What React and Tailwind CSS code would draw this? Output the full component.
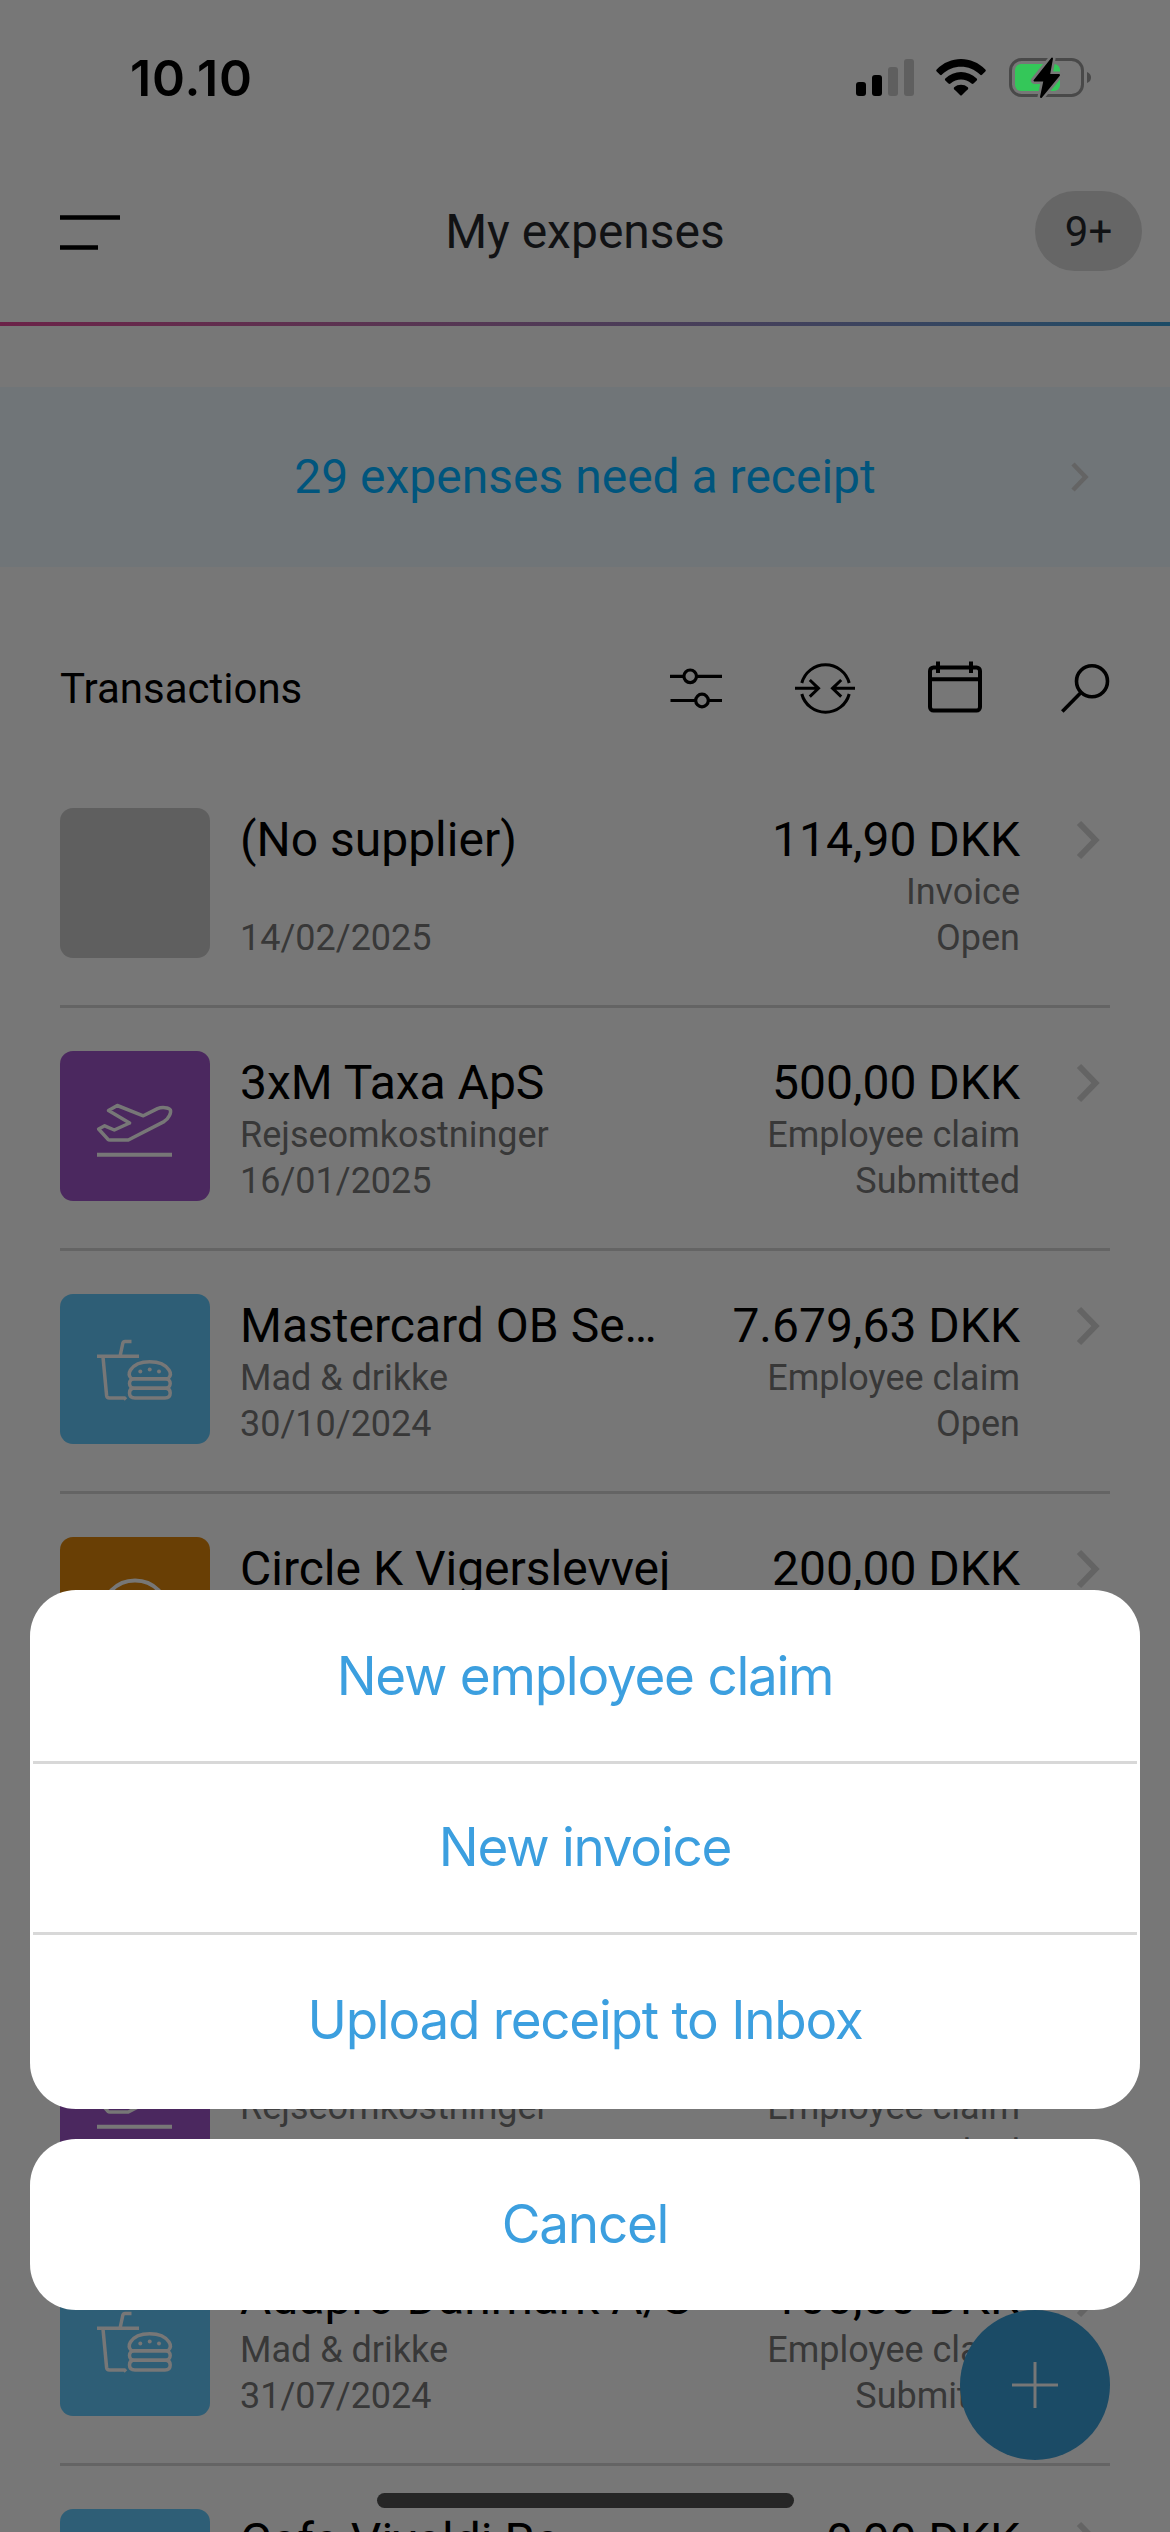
const rows = [
  { tile: "none", title: "(No supplier)", category: "", date: "14/02/2025", amount: "114,90 DKK", type: "Invoice", status: "Open" },
  { tile: "travel", title: "3xM Taxa ApS", category: "Rejseomkostninger", date: "16/01/2025", amount: "500,00 DKK", type: "Employee claim", status: "Submitted" },
  { tile: "food", title: "Mastercard OB Se…", category: "Mad & drikke", date: "30/10/2024", amount: "7.679,63 DKK", type: "Employee claim", status: "Open" },
  { tile: "other", title: "Circle K Vigerslevvej", category: "", date: "", amount: "200,00 DKK", type: "", status: "" },
  { tile: "none", title: "", category: "", date: "", amount: "", type: "", status: "" },
  { tile: "travel", title: "", category: "Rejseomkostninger", date: "31/07/2024", amount: "", type: "Employee claim", status: "Booked" },
  { tile: "food", title: "Adapro Danmark A/S", category: "Mad & drikke", date: "31/07/2024", amount: "100,00 DKK", type: "Employee claim", status: "Submitted" },
  { tile: "food", title: "Cafe Vivaldi Ro", category: "", date: "", amount: "0,00 DKK", type: "", status: "" },
];

const tileColors = {
  none: "bg-[#5f5f5f]",
  travel: "bg-[#4b285f]",
  food: "bg-[#2e5e76]",
  other: "bg-[#693f05]",
};

function TileIcon({ kind }) {
  return (
    <svg viewBox="0 0 150 150" className="size-[150px]" fill="none" stroke="#777777" strokeWidth="3.5">
      {kind === "travel" && (
        <>
          <path d="M50 89H68.3L104 70.6C109 67.5 111.5 61.5 110.3 58.8C109 56.3 101.5 56 97.5 57.6L83.3 64.8L57.3 54.5L48.5 59.6L69.6 72L54.3 79L44.7 74.8L38.6 78L47.8 88.2Q48.6 89 50 89Z" strokeLinejoin="round" />
          <path d="M37 103.7H112" strokeWidth="4" />
        </>
      )}
      {kind === "food" && (
        <>
          <path d="M37 62.3H79M60.3 61L62.9 49Q63.3 47.4 65 47.4H71.5" />
          <path d="M43 63L46.6 101.5Q46.9 104 49.4 104H64.5L66 105.5" />
          <path d="M71.5 84.7C68.5 82 69 78.5 70.5 76C74 70.5 81 67.7 89.8 67.7C98.6 67.7 105.5 70.5 109 76C111 79 111 82 108 84.7Z" strokeLinejoin="round" />
          <rect x="69.5" y="84.7" width="40.7" height="9.6" rx="4.8" />
          <path d="M73 94.3H106.5Q110.2 95 110.2 99Q110.2 104 105 104H75Q69.5 104 69.5 99Q69.5 95 73 94.3Z" />
          <g fill="#777777" stroke="none">
            <circle cx="80.3" cy="77.5" r="2" />
            <circle cx="89.7" cy="75.5" r="2" />
            <circle cx="99" cy="77.5" r="2" />
          </g>
        </>
      )}
      {kind === "other" && <circle cx="75" cy="77" r="33.5" strokeWidth="4" />}
    </svg>
  );
}

function Row({ row }) {
  return (
    <li className="h-[243px] px-[60px]">
      <div className="flex h-[200px] border-b-[3px] border-[#646464]">
        <div className={"size-[150px] shrink-0 overflow-hidden rounded-[13px] " + tileColors[row.tile]}>
          <TileIcon kind={row.tile} />
        </div>
        <div className="ml-[30px] flex-1 whitespace-nowrap pt-[2px]">
          <div className="h-[59px] text-[48px] leading-[59px] text-black">{row.title}</div>
          <div className="h-[46px] text-[36px] leading-[46px] text-[#383838]">{row.category}</div>
          <div className="h-[46px] text-[36px] leading-[46px] text-[#383838]">{row.date}</div>
        </div>
        <div className="whitespace-nowrap pt-[2px] text-right">
          <div className="h-[59px] text-[48px] leading-[59px] text-black">{row.amount}</div>
          <div className="h-[46px] text-[36px] leading-[46px] text-[#383838]">{row.type}</div>
          <div className="h-[46px] text-[36px] leading-[46px] text-[#383838]">{row.status}</div>
        </div>
        <svg viewBox="0 0 24 40" className="ml-[56px] mr-[10px] mt-[12px] h-[40px] w-[24px] shrink-0" fill="none" stroke="#646464" strokeWidth="6">
          <path d="M3 3L19.5 20L3 37" />
        </svg>
      </div>
    </li>
  );
}

function StatusBar() {
  return (
    <div className="flex h-[156px] items-start pl-[130px] pr-[79px] pt-[58px]">
      <div className="font-[Inter,sans-serif] text-[50px] font-semibold leading-[40px] tracking-[0.9px] text-black">10.10</div>
      <svg viewBox="0 0 58 37" className="ml-auto mt-[1px] h-[37px] w-[58px]">
        <rect x="0" y="23" width="10" height="14" rx="3" />
        <rect x="16" y="16" width="10" height="21" rx="3" />
        <rect x="32" y="8" width="10" height="29" rx="3" fill="#5f5f5f" />
        <rect x="48" y="0" width="10" height="37" rx="3" fill="#5f5f5f" />
      </svg>
      <svg viewBox="0 0 50 37" className="ml-[22px] mt-[1px] h-[37px] w-[50px]">
        <path d="M0.7 10.5C14 -3.5 36 -3.5 49.3 10.5Q50.3 11.5 49.3 12.5L46 15.7Q45 16.6 44 15.6C33.5 5.2 16.5 5.2 6 15.6Q5 16.6 4 15.7L0.7 12.5Q-0.3 11.5 0.7 10.5Z" />
        <path d="M9.3 19.5C18 10.7 32 10.7 40.7 19.5Q41.6 20.5 40.7 21.4L37.5 24.5Q36.5 25.4 35.5 24.5C29.5 19 20.5 19 14.5 24.5Q13.5 25.4 12.5 24.5L9.3 21.4Q8.4 20.5 9.3 19.5Z" />
        <path d="M18.2 28.3C22 25 28 25 31.8 28.3Q32.8 29.2 31.8 30.2L26 36Q25 37 24 36L18.2 30.2Q17.2 29.2 18.2 28.3Z" />
      </svg>
      <svg viewBox="0 0 82 42" className="ml-[23px] mt-[-1px] h-[42px] w-[82px]">
        <rect x="1.5" y="2.5" width="72" height="36" rx="11" fill="none" stroke="#494949" strokeWidth="3" />
        <rect x="6" y="7" width="45" height="27" rx="6" fill="#34c759" />
        <path d="M78 15Q82 16.5 82 20.5Q82 24.5 78 26Z" fill="#494949" />
        <path d="M43 1.5L25.5 23.5H35.5L32 40L50 18H40Z" stroke="#777777" strokeWidth="7" strokeLinejoin="round" fill="#777777" />
        <path d="M43 1.5L25.5 23.5H35.5L32 40L50 18H40Z" stroke="#000000" strokeWidth="2" strokeLinejoin="round" />
      </svg>
    </div>
  );
}

function Header() {
  return (
    <header>
      <div className="grid h-[166px] grid-cols-3 items-start">
        <svg viewBox="0 0 60 36" className="ml-[60px] mt-[59px] h-[36px] w-[60px]" stroke="#000000" strokeWidth="4.5">
          <path d="M0 2.5H60M0 32.5H38" />
        </svg>
        <h1 className="mt-[48px] whitespace-nowrap text-center text-[48px] leading-[55px] text-[#111214]">My expenses</h1>
        <div className="ml-auto mr-[28px] mt-[35px] flex h-[80px] w-[107px] items-center justify-center rounded-full bg-[#666666] text-[42px] text-[#111214]">9+</div>
      </div>
      <div className="h-[4px] bg-linear-to-r from-[#6b2248] to-[#1b4b66]" />
    </header>
  );
}

function Toolbar() {
  return (
    <div className="flex h-[241px] items-start px-[60px] pt-[94px]">
      <h2 className="text-[42px] leading-[56px] text-black">Transactions</h2>
      <svg viewBox="0 0 52 60" className="ml-auto mt-[-3px] h-[60px] w-[52px]" fill="none" stroke="#000000" strokeWidth="3.2">
        <path d="M0 18.3H14M26.5 18.3H52M0.5 42.5H25M38 42.5H52" />
        <circle cx="20.2" cy="18.3" r="6.3" />
        <circle cx="32" cy="42.5" r="6.3" />
      </svg>
      <svg viewBox="0 0 60 60" className="ml-[73px] mt-[-3px] h-[60px] w-[60px]" fill="none" stroke="#000000" strokeWidth="3">
        <path d="M6.8 25A24.5 24.5 0 0 1 54.2 25M6.8 36A24.5 24.5 0 0 0 54.2 36M0 30.3H23.5M60 30.3H37.5M14.8 22L23.5 30.3L14.8 38.6M46.2 22L37.5 30.3L46.2 38.6" />
      </svg>
      <svg viewBox="0 0 54 60" className="ml-[73px] mt-[-3px] h-[60px] w-[54px]" fill="none" stroke="#000000" strokeWidth="4">
        <rect x="2" y="9.5" width="50" height="43" rx="3.5" />
        <path d="M2 21.3H52M10 3.5V15M43 3.5V15" />
      </svg>
      <svg viewBox="0 0 50 60" className="ml-[78px] mt-[-3px] h-[60px] w-[50px]" fill="none" stroke="#000000" strokeWidth="3.6">
        <circle cx="32" cy="23.3" r="15.5" />
        <path d="M21 34.5L2.3 53.5" />
      </svg>
    </div>
  );
}

function ActionSheet() {
  return (
    <div className="absolute left-[30px] top-[1590px] w-[1110px] whitespace-nowrap text-center font-[Inter,sans-serif] text-[53px] tracking-[-1.25px] text-[#3c9fdf]">
      <div className="flex h-[519px] flex-col rounded-[46px] bg-white px-[3px]">
        <button className="h-[174px] border-b-[3px] border-[#d8d8d8] pt-[3px]">New employee claim</button>
        <button className="h-[171px] border-b-[3px] border-[#d8d8d8]">New invoice</button>
        <button className="h-[174px] pb-[3px]">Upload receipt to Inbox</button>
      </div>
      <button className="mt-[30px] block h-[171px] w-full rounded-[46px] bg-white">Cancel</button>
    </div>
  );
}

export default function App() {
  return (
    <div className="relative h-[2532px] w-[1170px] overflow-hidden bg-[#777777] font-[Roboto,sans-serif]">
      <StatusBar />
      <Header />
      <div className="mt-[61px] flex h-[180px] items-center bg-[#707578] pl-[99px] pr-[81px]">
        <div className="flex-1 text-center text-[48px] leading-[56px] text-[#00557d]">29 expenses need a receipt</div>
        <svg viewBox="0 0 18 30" className="h-[30px] w-[18px]" fill="none" stroke="#646464" strokeWidth="4.5">
          <path d="M2 2L14.5 15L2 28" />
        </svg>
      </div>
      <Toolbar />
      <ul>
        {rows.map((row, i) => (
          <Row key={i} row={row} />
        ))}
      </ul>
      <button className="absolute left-[960px] top-[2310px] flex size-[150px] items-center justify-center rounded-full bg-[#1b4b66]">
        <svg viewBox="0 0 46 46" className="size-[46px]" stroke="#777777" strokeWidth="3">
          <path d="M23 0V46M0 23H46" />
        </svg>
      </button>
      <div className="absolute left-[377px] top-[2493px] h-[15px] w-[417px] rounded-full bg-[#262626]" />
      <ActionSheet />
    </div>
  );
}
